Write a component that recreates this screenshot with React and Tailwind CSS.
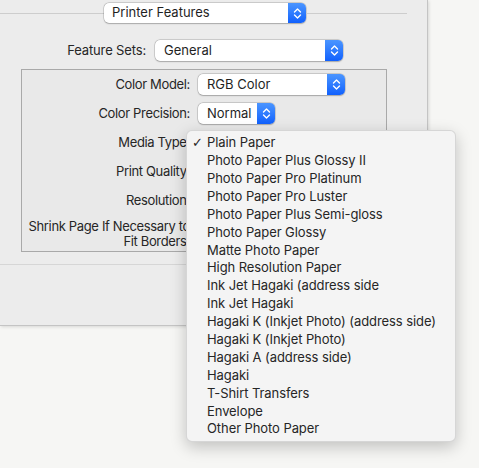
import React from "react";

const mediaTypes = [
  "Plain Paper",
  "Photo Paper Plus Glossy II",
  "Photo Paper Pro Platinum",
  "Photo Paper Pro Luster",
  "Photo Paper Plus Semi-gloss",
  "Photo Paper Glossy",
  "Matte Photo Paper",
  "High Resolution Paper",
  "Ink Jet Hagaki (address side",
  "Ink Jet Hagaki",
  "Hagaki K (Inkjet Photo) (address side)",
  "Hagaki K (Inkjet Photo)",
  "Hagaki A (address side)",
  "Hagaki",
  "T-Shirt Transfers",
  "Envelope",
  "Other Photo Paper",
];

// Up/down chevrons on the blue part of a pop-up button
function Chevrons() {
  return (
    <svg width="9" height="13" viewBox="0 0 9 13" fill="none">
      <path d="M1.5 5 L4.5 2 L7.5 5" stroke="white" strokeWidth="1.4" strokeLinecap="round" strokeLinejoin="round" />
      <path d="M1.5 8 L4.5 11 L7.5 8" stroke="white" strokeWidth="1.4" strokeLinecap="round" strokeLinejoin="round" />
    </svg>
  );
}

function PopUp({ value, className = "", textClass = "pl-[9px]" }) {
  return (
    <div
      className={`flex shrink-0 rounded-[5px] bg-white shadow-[0_0_0_0.5px_rgba(0,0,0,0.22),0_0.5px_1.5px_rgba(0,0,0,0.2)] ${className}`}
    >
      <div className={`flex flex-1 items-center whitespace-nowrap text-[13px] text-[#1f1f1f] ${textClass}`}>{value}</div>
      <div className="flex w-[18px] items-center justify-center rounded-r-[5px] bg-gradient-to-b from-[#4b95ff] to-[#1060fd]">
        <Chevrons />
      </div>
    </div>
  );
}

function Row({ label, children, className = "h-[21px]" }) {
  return (
    <div className={`flex items-center ${className}`}>
      <div className="w-[176px] shrink-0 whitespace-nowrap pr-[8px] text-right text-[13px] leading-[15px] tracking-[-0.35px] text-[#262626]">
        {label}
      </div>
      {children}
    </div>
  );
}

export default function App() {
  return (
    <div
      className="relative h-[468px] w-[479px] overflow-hidden bg-[#f6f6f4]"
      style={{ fontFamily: "Inter, 'Liberation Sans', sans-serif" }}
    >
      {/* sheet panel */}
      <div className="flex h-[326px] w-[428px] flex-col border-r border-b border-[#c4c4c4] bg-[#ececec] shadow-[1px_1px_3px_rgba(0,0,0,0.12)]">
        {/* top pop-up with separator */}
        <div className="mt-[3px] flex h-[20px] w-[407px] items-center">
          <div className="h-px w-[104px] bg-[#cdcdcd]" />
          <PopUp value="Printer Features" className="h-[20px] w-[202px]" textClass="pl-[8px]" />
          <div className="h-px flex-1 bg-[#cdcdcd]" />
        </div>

        {/* feature sets */}
        <div className="mt-[17px] flex h-[21px] items-center">
          <div className="w-[155px] shrink-0 pr-[9px] text-right text-[13px] tracking-[-0.15px] text-[#262626]">Feature Sets:</div>
          <PopUp value="General" className="h-[21px] w-[188px]" />
        </div>

        {/* group box */}
        <div className="mt-[8px] ml-[21px] flex h-[183px] w-[366px] flex-col gap-[8px] border border-[#a9a9a9] bg-[#e9e9e9] pt-[4px]">
          <Row label="Color Model:">
            <PopUp value="RGB Color" className="h-[21px] w-[147px]" />
          </Row>
          <Row label="Color Precision:">
            <PopUp value="Normal" className="h-[21px] w-[77px]" />
          </Row>
          <Row label="Media Type:">
            <PopUp value="Plain Paper" className="h-[21px] w-[150px]" />
          </Row>
          <Row label="Print Quality:">
            <PopUp value="Standard" className="h-[21px] w-[120px]" />
          </Row>
          <Row label="Resolution:">
            <PopUp value="360 dpi" className="h-[21px] w-[100px]" />
          </Row>
          <Row label={<>Shrink Page If Necessary to<br />Fit Borders:</>} className="h-[30px]">
            <div className="h-[14px] w-[14px] rounded-[3px] bg-white shadow-[0_0_0_0.5px_rgba(0,0,0,0.3)]" />
          </Row>
        </div>

        <div className="mt-[12px] h-px w-full bg-[#d6d6d6]" />
      </div>

      {/* open media type menu */}
      <div className="absolute left-[186px] top-[130px] w-[270px] rounded-[6px] border border-[rgba(0,0,0,0.12)] bg-[#f4f4f4] pt-[3px] pb-[3px] shadow-[0_5px_16px_rgba(0,0,0,0.22)]">
        {mediaTypes.map((t, i) => (
          <div key={t} className="flex h-[17.9px] items-center whitespace-nowrap text-[13px] tracking-[-0.08px] text-[#262626]">
            <span className="w-[20px] pl-[5px] text-[13px]" style={{ fontFamily: "'DejaVu Sans', sans-serif" }}>
              {i === 0 ? "✓" : ""}
            </span>
            <span>{t}</span>
          </div>
        ))}
      </div>
    </div>
  );
}
